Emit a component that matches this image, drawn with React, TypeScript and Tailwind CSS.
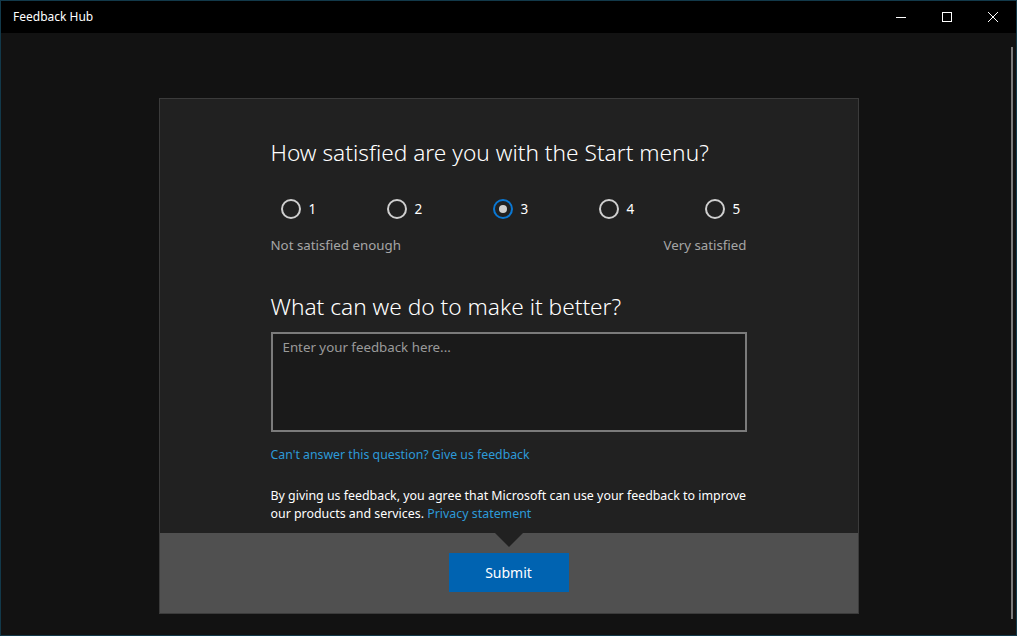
import { FC } from "react";

const options = [1, 2, 3, 4, 5];
const selected = 3;

const Radio: FC<{ value: number; checked: boolean }> = ({ value, checked }) => (
  <div className="flex items-center gap-[8px]">
    {checked ? (
      <span className="flex h-5 w-5 items-center justify-center rounded-full border-2 border-[#0a78d4]">
        <span className="h-2 w-2 rounded-full bg-[#d0d0d0]" />
      </span>
    ) : (
      <span className="h-5 w-5 rounded-full border-2 border-[#cfcfcf]" />
    )}
    <span className="text-[13.5px] leading-5 text-white">{value}</span>
  </div>
);

const TitleBar: FC = () => (
  <div className="flex h-8 shrink-0 items-center bg-black">
    <span className="pl-[12px] text-[12px] text-white">Feedback Hub</span>
    <div className="ml-auto flex h-full">
      <button className="flex h-full w-[46px] items-center justify-center">
        <svg width="10" height="10" viewBox="0 0 10 10">
          <path d="M0 5.5h10" stroke="white" strokeWidth="1" />
        </svg>
      </button>
      <button className="flex h-full w-[46px] items-center justify-center">
        <svg width="10" height="10" viewBox="0 0 10 10">
          <rect x="0.5" y="0.5" width="9" height="9" fill="none" stroke="white" strokeWidth="1" />
        </svg>
      </button>
      <button className="flex h-full w-[46px] items-center justify-center">
        <svg width="10" height="10" viewBox="0 0 10 10">
          <path d="M0 0L10 10M10 0L0 10" stroke="white" strokeWidth="1" />
        </svg>
      </button>
    </div>
  </div>
);

export default function App() {
  return (
    <div
      className="flex h-[636px] w-[1017px] flex-col overflow-hidden border border-[#12394a] bg-[#121212]"
      style={{ fontFamily: '"Segoe UI", "Noto Sans", "Open Sans", sans-serif' }}
    >
      <TitleBar />
      <div className="relative flex-1 pt-[65px]">
        <div className="absolute top-[14px] bottom-[16px] right-[3px] w-[2px] bg-[#7a7a7a]" />

        <div className="mx-auto w-[700px] border border-[#3b3b3b] bg-[#212121]">
          <div className="px-[111px] pt-[38px] pb-[10px]">
            <h1 className="text-[22.7px] font-light leading-8 text-white">
              How satisfied are you with the Start menu?
            </h1>
            <div className="mt-[30px] grid grid-cols-[106px_106px_106px_106px_auto] pl-[10px]">
              {options.map((o) => (
                <Radio key={o} value={o} checked={o === selected} />
              ))}
            </div>
            <div className="mt-4 flex justify-between text-[13.3px] leading-5 text-[#a6a6a6]">
              <span>Not satisfied enough</span>
              <span>Very satisfied</span>
            </div>

            <h2 className="mt-9 text-[22.7px] font-light leading-8 text-white">
              What can we do to make it better?
            </h2>
            <textarea
              className="mt-[9px] block h-[100px] w-full resize-none border-2 border-[#7b7b7b] bg-[#1a1a1a] px-[10px] py-[3px] text-[13.3px] leading-5 text-white outline-none placeholder:text-[#9a9a9a]"
              placeholder="Enter your feedback here..."
            />

            <a className="mt-[13px] block text-[12.3px] leading-5 text-[#2d9ad8]">
              Can't answer this question? Give us feedback
            </a>

            <p className="mt-[22px] text-[12.4px] leading-[18px] text-white">
              By giving us feedback, you agree that Microsoft can use your feedback to improve our
              products and services.{" "}
              <a className="inline-block text-[#2d9ad8]">Privacy statement</a>
            </p>
          </div>

          <div className="relative flex h-20 justify-center bg-[#505050] pt-5">
            <span className="absolute top-0 left-1/2 -translate-x-1/2 border-x-[14px] border-t-[14px] border-x-transparent border-t-[#212121]" />
            <button className="h-[39px] w-[120px] bg-[#0063b1] text-[14px] text-white">
              Submit
            </button>
          </div>
        </div>
      </div>
    </div>
  );
}
